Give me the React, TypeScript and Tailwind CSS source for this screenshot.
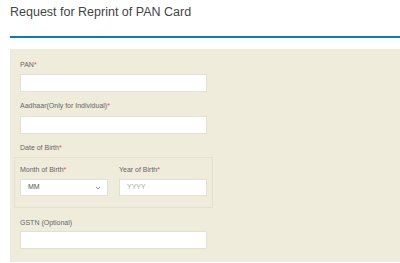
import React from "react";

function Label({ text, req = true, className = "" }: { text: string; req?: boolean; className?: string }) {
  return (
    <div className={`text-[7px] leading-[9px] text-[#666] ${className}`}>
      {text}
      {req && <span className="text-[#d9534f]">*</span>}
    </div>
  );
}

export default function App() {
  return (
    <div className="w-[400px] h-[263px] bg-white overflow-hidden" style={{ fontFamily: '"Liberation Sans", Arial, sans-serif' }}>
      <div className="pl-[10px]">
        <div className="pt-[5px] h-[36px] text-[12.5px] leading-[15px] text-[#444]">Request for Reprint of PAN Card</div>
        <div className="h-[2px] bg-[#0c7f9a]" />
        <div className="mt-[11px] h-[213px] bg-[#efecdc] pt-[11px] pl-[10px]">
          <Label text="PAN" />
          <div className="mt-[5px] w-[187px] h-[18px] bg-white border border-[#e2e0d6]" />
          <Label text="Aadhaar(Only for Individual)" className="mt-[9px]" />
          <div className="mt-[6px] w-[187px] h-[18px] bg-white border border-[#e2e0d6]" />
          <Label text="Date of Birth" className="mt-[9px]" />
          <div className="mt-[5px] -ml-[6px] w-[199px] h-[51px] border border-[#e4e1d2] pt-[7px] pl-[5px] flex gap-[11px]">
            <div>
              <Label text="Month of Birth" className="text-[#6d5d45]" />
              <div className="mt-[5px] w-[88px] h-[17px] bg-white border border-[#e2e0d6] flex items-center justify-between pl-[7px] pr-[6px]">
                <span className="text-[7px] text-[#555]">MM</span>
                <svg width="6" height="4" viewBox="0 0 6 4">
                  <path d="M1 1 L3 3 L5 1" stroke="#888" strokeWidth="0.9" fill="none" />
                </svg>
              </div>
            </div>
            <div>
              <Label text="Year of Birth" className="text-[#6d5d45]" />
              <div className="mt-[5px] w-[88px] h-[17px] bg-white border border-[#e2e0d6] flex items-center pl-[7px]">
                <span className="text-[7px] text-[#aaa]">YYYY</span>
              </div>
            </div>
          </div>
          <Label text="GSTN (Optional)" req={false} className="mt-[10px]" />
          <div className="mt-[4px] w-[187px] h-[18px] bg-white border border-[#e2e0d6]" />
        </div>
      </div>
    </div>
  );
}
